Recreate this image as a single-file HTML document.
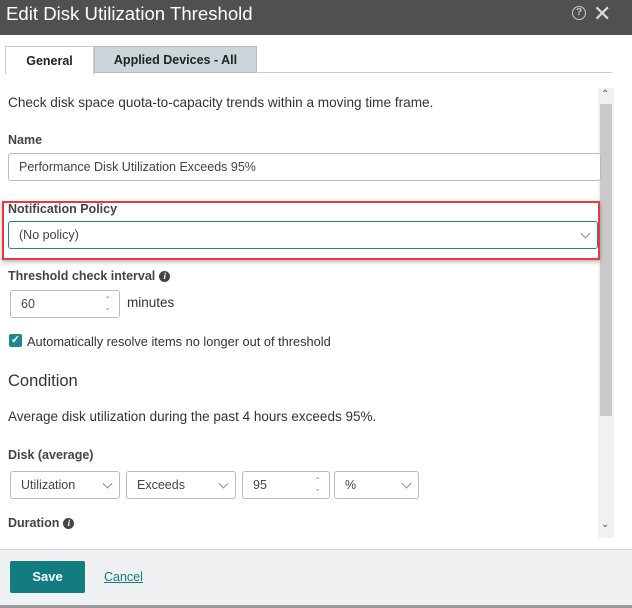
<!DOCTYPE html>
<html><head><style>
*{box-sizing:border-box;margin:0;padding:0}
body{width:632px;height:608px;position:relative;overflow:hidden;background:#fff;font-family:"Liberation Sans",sans-serif;color:#333;font-size:12.5px}
.a{position:absolute;white-space:nowrap}
.lbl{font-weight:bold;font-size:12.5px;color:#444}
.box{position:absolute;border:1px solid #bbb;border-radius:3px;background:#fff;padding-left:10px;display:flex;align-items:center;font-size:12.5px;color:#444}
.chev{position:absolute;right:8px;top:50%;width:7px;height:7px;border-right:1px solid #888;border-bottom:1px solid #888;transform:translateY(-70%) rotate(45deg)}
.info{display:inline-block;width:11px;height:11px;border-radius:50%;background:#444;color:#fff;font-size:9px;font-style:italic;font-weight:bold;text-align:center;line-height:11px;margin-left:4px;vertical-align:1px;font-family:"Liberation Serif",serif}
.spin{position:absolute;right:8px;top:5px;color:#999;font-size:8px;line-height:8px}
</style></head><body>
<div class="a" style="left:0;top:0;width:632px;height:35px;background:#505050"></div>
<div class="a" style="left:6px;top:3px;color:#fff;font-size:18.6px">Edit Disk Utilization Threshold</div>
<div class="a" style="left:572px;top:6px;width:14px;height:14px;border:1.5px solid #ccc;border-radius:50%;color:#ccc;font-size:10px;font-weight:bold;text-align:center;line-height:11px">?</div>
<div class="a" style="left:593px;top:1px;color:#ddd;font-size:22px">✕</div>

<div class="a" style="left:5px;top:46px;width:89px;height:28px;background:#fff;border:1px solid #ccc;border-bottom:none;font-weight:bold;font-size:12.5px;text-align:center;line-height:28px;color:#222">General</div>
<div class="a" style="left:94px;top:46px;width:163px;height:27px;background:#ccd6da;border:1px solid #bbb;font-weight:bold;font-size:12.5px;text-align:center;line-height:27px;color:#222">Applied Devices - All</div>
<div class="a" style="left:257px;top:72px;width:355px;height:1px;background:#ccc"></div>

<div class="a" style="left:598px;top:88px;width:16px;height:450px;background:#f1f1f1"></div>
<div class="a" style="left:600px;top:104px;width:12px;height:312px;background:#c9c9c9"></div>
<div class="a" style="left:601px;top:89px;font-size:10px;color:#555">⌃</div>
<div class="a" style="left:601px;top:519px;font-size:10px;color:#555">⌄</div>

<div class="a" style="left:8px;top:95px;font-size:13.6px">Check disk space quota-to-capacity trends within a moving time frame.</div>
<div class="a lbl" style="left:8px;top:133px">Name</div>
<div class="box" style="left:8px;top:153px;width:593px;height:28px">Performance Disk Utilization Exceeds 95%</div>

<div class="a" style="left:2px;top:201px;width:598px;height:59px;border:2.5px solid #e8393d;box-shadow:0 2px 4px rgba(0,0,0,.3)"></div>
<div class="a lbl" style="left:8px;top:202px">Notification Policy</div>
<div class="box" style="left:8px;top:221px;width:590px;height:28px;border-color:#1a8a8e">(No policy)<span class="chev"></span></div>

<div class="a lbl" style="left:8px;top:269px">Threshold check interval<span class="info">i</span></div>
<div class="box" style="left:10px;top:290px;width:110px;height:28px">60<span class="spin">⌃<br>⌄</span></div>
<div class="a" style="left:127px;top:295px;font-size:13.5px">minutes</div>
<div class="a" style="left:9px;top:334px;width:13px;height:13px;background:#1a8a8e;border-radius:2px;color:#fff;font-size:11px;line-height:13px;text-align:center;font-weight:bold">✓</div>
<div class="a" style="left:27px;top:334px;font-size:12.8px">Automatically resolve items no longer out of threshold</div>

<div class="a" style="left:8px;top:372px;font-size:16.5px;color:#333">Condition</div>
<div class="a" style="left:8px;top:409px;font-size:13.5px">Average disk utilization during the past 4 hours exceeds 95%.</div>
<div class="a lbl" style="left:8px;top:448px">Disk (average)</div>
<div class="box" style="left:10px;top:471px;width:110px;height:28px">Utilization<span class="chev"></span></div>
<div class="box" style="left:126px;top:471px;width:110px;height:28px">Exceeds<span class="chev"></span></div>
<div class="box" style="left:242px;top:471px;width:88px;height:28px">95<span class="spin">⌃<br>⌄</span></div>
<div class="box" style="left:334px;top:471px;width:85px;height:28px">%<span class="chev"></span></div>
<div class="a lbl" style="left:8px;top:516px">Duration<span class="info">i</span></div>

<div class="a" style="left:0;top:549px;width:632px;height:59px;background:#eef0f1;border-top:1px solid #d4d8da;border-bottom:3px solid #9a9a9a"></div>
<div class="a" style="left:10px;top:561px;width:75px;height:32px;background:#137c80;border-radius:2px;color:#fff;font-weight:bold;font-size:13px;text-align:center;line-height:32px">Save</div>
<div class="a" style="left:104px;top:570px;color:#137c80;text-decoration:underline">Cancel</div>
</body></html>
